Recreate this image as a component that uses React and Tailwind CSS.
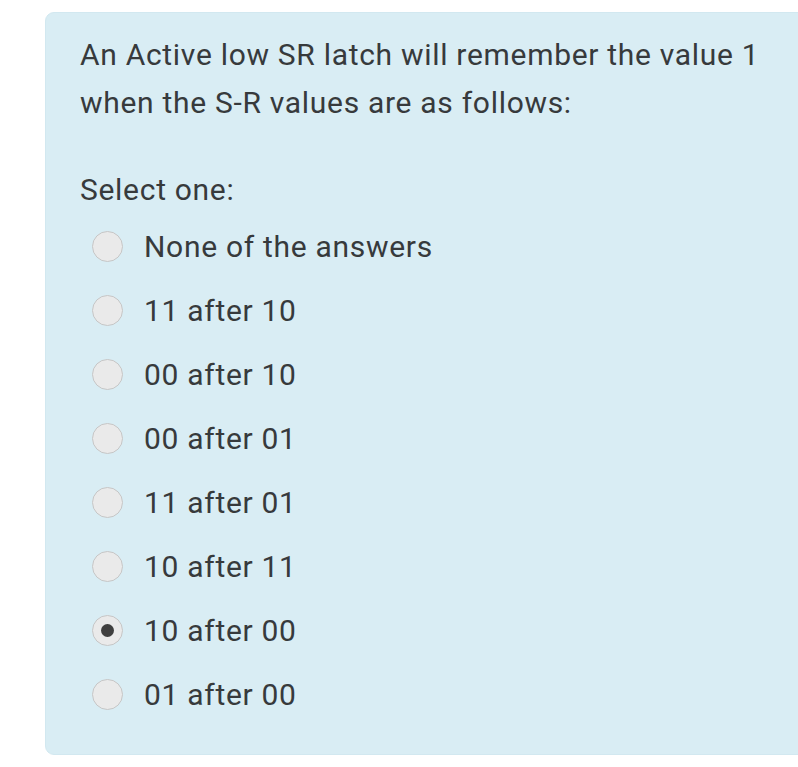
import React, { useState } from "react";

const options = [
  "None of the answers",
  "11 after 10",
  "00 after 10",
  "00 after 01",
  "11 after 01",
  "10 after 11",
  "10 after 00",
  "01 after 00",
];

const Radio = ({ checked }) => (
  <span className="flex h-[31px] w-[31px] shrink-0 items-center justify-center rounded-full border border-[#c6c6c6] bg-[#eaeaea]">
    {checked && <span className="h-[13px] w-[13px] rounded-full bg-[#3f3f3f]" />}
  </span>
);

const App = () => {
  const [selected, setSelected] = useState(6);

  return (
    <div className="h-[767px] w-[798px] overflow-hidden bg-white font-['Roboto',sans-serif] text-[#373a3c]">
      <div className="ml-[45px] mt-[12px] w-[800px] rounded-[9px] border border-[#d2e8f0] bg-[#d9edf4] pb-[28px] pl-[34px] pt-[18px]">
        <div className="text-[30px] leading-[48px] tracking-[0.7px]">
          An Active low SR latch will remember the value 1
          <br />
          when the S-R values are as follows:
        </div>
        <div className="mt-[39px] text-[30px] leading-[48px] tracking-[0.7px]">Select one:</div>
        <div className="flex flex-col">
          {options.map((opt, i) => (
            <label
              key={i}
              onClick={() => setSelected(i)}
              className="ml-[12px] flex h-[64px] cursor-pointer items-center gap-[21px] text-[30px] tracking-[0.7px]"
            >
              <Radio checked={selected === i} />
              <span>{opt}</span>
            </label>
          ))}
        </div>
      </div>
    </div>
  );
};

export default App;
